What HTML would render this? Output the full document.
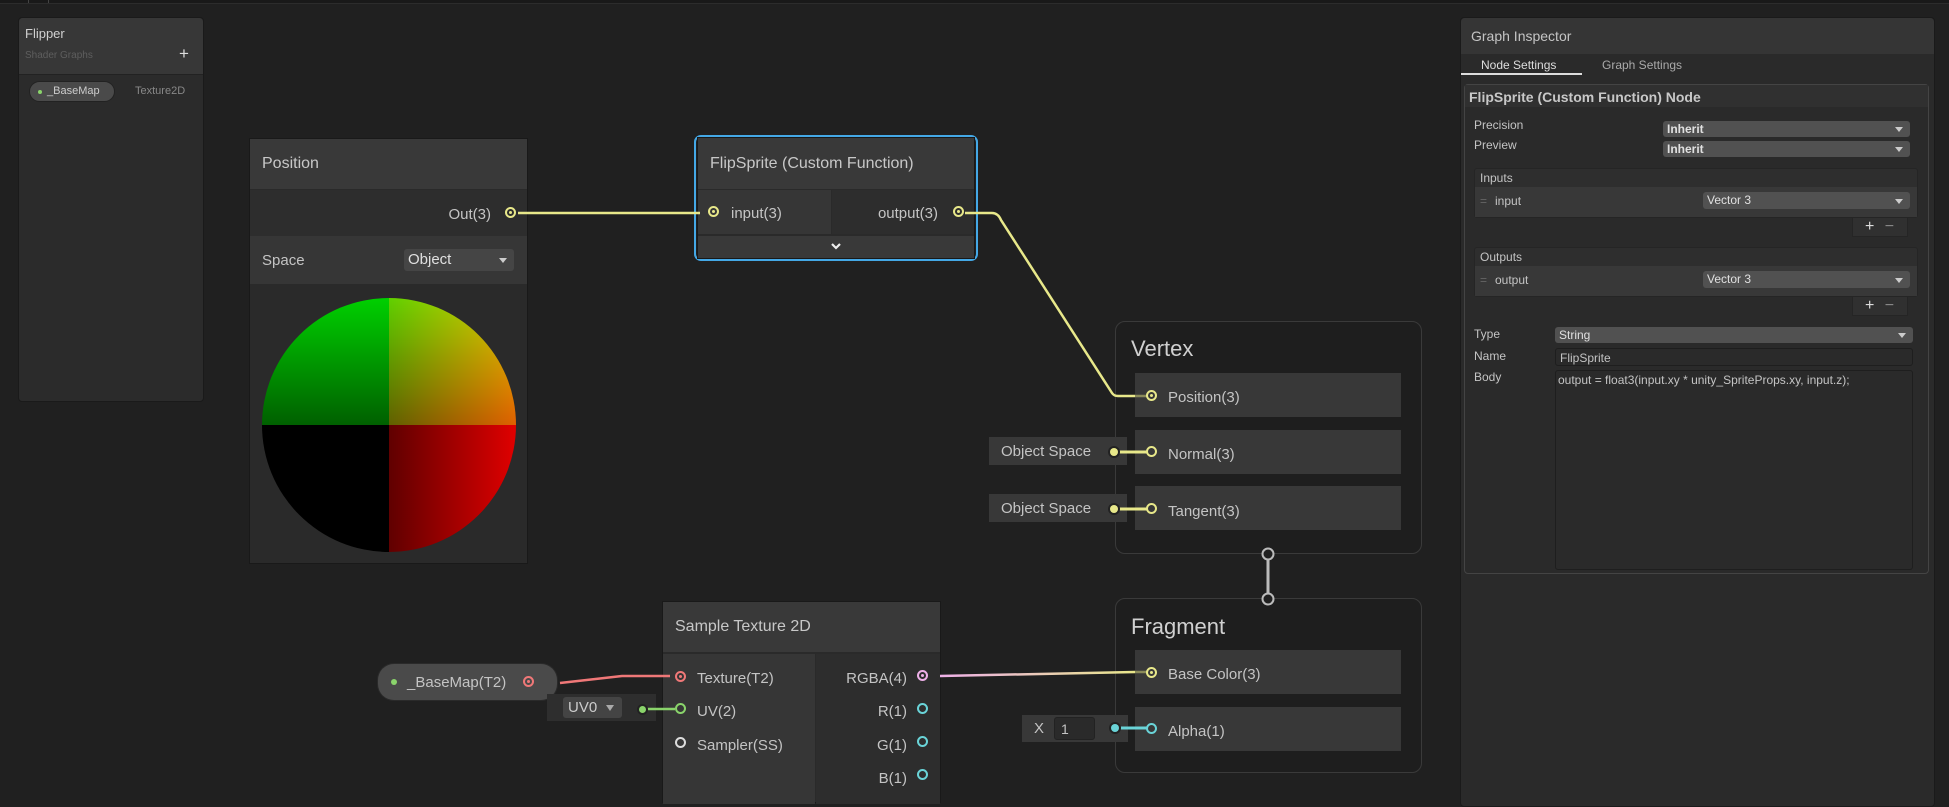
<!DOCTYPE html>
<html><head><meta charset="utf-8"><style>
*{box-sizing:border-box;margin:0;padding:0}
body{width:1949px;height:796px;background:#202020;font-family:"Liberation Sans",sans-serif;color:#c4c4c4;position:relative;overflow:hidden}
.a{position:absolute}
.node{position:absolute;background:#2a2a2a;box-shadow:0 0 0 1px #191919}
.hdr{position:absolute;left:0;right:0;top:0;background:#393939;font-size:16px;color:#c8c8c8;padding-left:12px}
.row{position:absolute;font-size:15px;color:#c4c4c4;white-space:nowrap}
.port{position:absolute;width:11px;height:11px;border-radius:50%;border:2px solid #999;z-index:3}
.pf::after{content:"";position:absolute;left:2px;top:2px;width:3px;height:3px;border-radius:50%;background:currentColor}
.ctx{position:absolute;border:1px solid #3a3a3a;border-radius:10px;background:#1e1e1e}
.slot{position:absolute;background:#383838;font-size:15px;color:#c4c4c4}
.dd{position:absolute;background:#515151;border-radius:3px;font-size:12px;font-weight:bold;color:#e0e0e0;padding-left:4px}
.dd::after{content:"";position:absolute;right:7px;top:50%;margin-top:-2px;border-left:4px solid transparent;border-right:4px solid transparent;border-top:5px solid #ccc}
.lbl{position:absolute;font-size:12px;color:#c4c4c4}
</style></head><body>
<div class="a" style="left:0;top:0;width:1949px;height:3px;background:#191919"></div>
<div class="a" style="left:0;top:3px;width:1949px;height:1px;background:#2c2c2c"></div>
<div class="a" style="left:28px;top:0;width:1px;height:3px;background:#444"></div>
<div class="a" style="left:48px;top:0;width:1px;height:3px;background:#444"></div>

<div class="a" style="left:18px;top:17px;width:186px;height:385px;background:#2b2b2b;border-radius:4px;border:1px solid #1a1a1a">
 <div class="a" style="left:0;top:0;width:184px;height:57px;background:#373737;border-radius:4px 4px 0 0;border-bottom:1px solid #222"></div>
 <div class="a" style="left:6px;top:8px;font-size:13px;color:#d0d0d0">Flipper</div>
 <div class="a" style="left:6px;top:32px;font-size:10px;color:#5e5e5e">Shader Graphs</div>
 <div class="a" style="left:160px;top:26px;font-size:17px;color:#ddd">+</div>
 <div class="a" style="left:10px;top:63px;width:86px;height:21px;border-radius:11px;background:#4a4a4a;border:1px solid #222;font-size:11px;color:#ccc;padding:3px 0 0 17px">_BaseMap</div>
 <div class="a" style="left:19px;top:72px;width:4px;height:4px;border-radius:50%;background:#8ad46b"></div>
 <div class="a" style="left:116px;top:67px;font-size:11px;color:#888">Texture2D</div>
</div>

<div class="node" style="left:250px;top:139px;width:277px;height:424px">
 <div class="hdr" style="height:50px;line-height:50px">Position</div>
 <div class="a" style="left:0;top:51px;width:277px;height:46px;background:#2d2d2d"></div>
 <div class="row" style="right:36px;top:67px">Out(3)</div>
 <div class="port pf" style="left:255px;top:68px;color:#e8e88a;border-color:#e8e88a"></div>
 <div class="a" style="left:0;top:97px;width:277px;height:48px;background:#363636"></div>
 <div class="row" style="left:12px;top:113px">Space</div>
 <div class="dd" style="left:154px;top:110px;width:110px;height:22px;font-weight:normal;font-size:15px;line-height:22px;background:#454545">Object</div>
 <svg class="a" style="left:12px;top:159px" width="254" height="254">
  <defs>
   <linearGradient id="rx" x1="0" x2="1"><stop offset="0.5" stop-color="#000"/><stop offset="0.5" stop-color="#600000"/><stop offset="1" stop-color="#e00000"/></linearGradient>
   <linearGradient id="gy" x1="0" y1="1" x2="0" y2="0"><stop offset="0.5" stop-color="#000"/><stop offset="0.5" stop-color="#006000"/><stop offset="1" stop-color="#00d000"/></linearGradient>
   <clipPath id="cc"><circle cx="127" cy="127" r="127"/></clipPath>
  </defs>
  <g clip-path="url(#cc)">
   <rect width="254" height="254" fill="url(#rx)"/>
   <rect width="254" height="254" fill="url(#gy)" style="mix-blend-mode:screen"/>
  </g>
 </svg>
</div>

<div class="a" style="left:694px;top:135px;width:284px;height:126px;border:2px solid #44a8e6;border-radius:7px"></div>
<div class="node" style="left:698px;top:138px;width:276px;height:120px;background:#2a2a2a">
 <div class="hdr" style="height:51px;line-height:51px">FlipSprite (Custom Function)</div>
 <div class="a" style="left:0;top:52px;width:133px;height:44px;background:#363636"></div>
 <div class="a" style="left:134px;top:52px;width:142px;height:44px;background:#2d2d2d"></div>
 <div class="port pf" style="left:10px;top:68px;color:#e8e88a;border-color:#e8e88a"></div>
 <div class="row" style="left:33px;top:67px">input(3)</div>
 <div class="row" style="right:36px;top:67px">output(3)</div>
 <div class="port pf" style="left:255px;top:68px;color:#e8e88a;border-color:#e8e88a"></div>
 <div class="a" style="left:0;top:98px;width:276px;height:22px;background:#393939"></div>
 <svg class="a" style="left:132px;top:104px" width="12" height="9"><path d="M2 2 L6 6 L10 2" stroke="#eee" stroke-width="2.2" fill="none"/></svg>
</div>

<div class="ctx" style="left:1115px;top:321px;width:307px;height:233px"></div>
<div class="a" style="left:1131px;top:336px;font-size:22px;color:#d0d0d0">Vertex</div>
<div class="slot" style="left:1135px;top:373px;width:266px;height:44px"></div>
<div class="slot" style="left:1135px;top:430px;width:266px;height:44px"></div>
<div class="slot" style="left:1135px;top:486px;width:266px;height:44px"></div>
<div class="port pf" style="left:1146px;top:390px;color:#e8e88a;border-color:#e8e88a"></div>
<div class="row" style="left:1168px;top:389px">Position(3)</div>
<div class="port" style="left:1146px;top:446px;border-color:#e8e88a;background:#383838"></div>
<div class="row" style="left:1168px;top:446px">Normal(3)</div>
<div class="port" style="left:1146px;top:503px;border-color:#e8e88a;background:#383838"></div>
<div class="row" style="left:1168px;top:503px">Tangent(3)</div>
<div class="a" style="left:989px;top:437px;width:138px;height:28px;background:#383838"></div>
<div class="row" style="left:1001px;top:443px">Object Space</div>
<div class="a" style="left:1110px;top:448px;width:8px;height:8px;border-radius:50%;background:#e8e88a;box-shadow:0 0 0 2px #222;z-index:3"></div>
<div class="a" style="left:989px;top:494px;width:138px;height:28px;background:#383838"></div>
<div class="row" style="left:1001px;top:500px">Object Space</div>
<div class="a" style="left:1110px;top:505px;width:8px;height:8px;border-radius:50%;background:#e8e88a;box-shadow:0 0 0 2px #222;z-index:3"></div>

<div class="ctx" style="left:1115px;top:598px;width:307px;height:175px"></div>
<div class="a" style="left:1131px;top:614px;font-size:22px;color:#d0d0d0">Fragment</div>
<div class="slot" style="left:1135px;top:650px;width:266px;height:44px"></div>
<div class="slot" style="left:1135px;top:707px;width:266px;height:44px"></div>
<div class="port pf" style="left:1146px;top:667px;color:#e8e88a;border-color:#e8e88a"></div>
<div class="row" style="left:1168px;top:666px">Base Color(3)</div>
<div class="port" style="left:1146px;top:723px;border-color:#6ad4d8;background:#383838"></div>
<div class="row" style="left:1168px;top:723px">Alpha(1)</div>
<div class="a" style="left:1022px;top:715px;width:106px;height:27px;background:#383838"></div>
<div class="row" style="left:1034px;top:720px">X</div>
<div class="a" style="left:1054px;top:717px;width:41px;height:23px;background:#2a2a2a;border:1px solid #222;border-radius:3px;font-size:14px;padding:3px 0 0 6px">1</div>
<div class="a" style="left:1111px;top:724px;width:8px;height:8px;border-radius:50%;background:#6ad4d8;box-shadow:0 0 0 2px #222;z-index:3"></div>

<div class="node" style="left:663px;top:602px;width:277px;height:200px">
 <div class="hdr" style="height:50px;line-height:50px">Sample Texture 2D</div>
 <div class="a" style="left:0;top:52px;width:152px;height:150px;background:#363636"></div>
 <div class="a" style="left:153px;top:52px;width:124px;height:150px;background:#2d2d2d"></div>
 <div class="port pf" style="left:12px;top:69px;color:#f07878;border-color:#f07878"></div>
 <div class="row" style="left:34px;top:68px">Texture(T2)</div>
 <div class="port" style="left:12px;top:101px;border-color:#8ad46b"></div>
 <div class="row" style="left:34px;top:101px">UV(2)</div>
 <div class="port" style="left:12px;top:135px;border-color:#ddd"></div>
 <div class="row" style="left:34px;top:135px">Sampler(SS)</div>
 <div class="row" style="right:33px;top:68px">RGBA(4)</div>
 <div class="port pf" style="left:254px;top:68px;color:#eeb0e8;border-color:#eeb0e8"></div>
 <div class="row" style="right:33px;top:101px">R(1)</div>
 <div class="port" style="left:254px;top:101px;border-color:#6ad4d8"></div>
 <div class="row" style="right:33px;top:135px">G(1)</div>
 <div class="port" style="left:254px;top:134px;border-color:#6ad4d8"></div>
 <div class="row" style="right:33px;top:168px">B(1)</div>
 <div class="port" style="left:254px;top:167px;border-color:#6ad4d8"></div>
</div>

<div class="a" style="left:378px;top:664px;width:179px;height:36px;border-radius:16px;background:#4a4a4a;box-shadow:0 0 0 1px #2a2a2a"></div>
<div class="a" style="left:391px;top:679px;width:6px;height:6px;border-radius:50%;background:#8ad46b"></div>
<div class="row" style="left:407px;top:674px;font-size:15px">_BaseMap(T2)</div>
<div class="port pf" style="left:523px;top:676px;color:#f07878;border-color:#f07878"></div>
<div class="a" style="left:547px;top:694px;width:109px;height:27px;background:#2e2e2e"></div>
<div class="a" style="left:563px;top:697px;width:59px;height:21px;background:#444;border-radius:3px;font-size:15px;padding:2px 0 0 5px;color:#ccc">UV0</div>
<div class="a" style="left:606px;top:705px;border-left:4px solid transparent;border-right:4px solid transparent;border-top:6px solid #aaa"></div>
<div class="a" style="left:639px;top:706px;width:7px;height:7px;border-radius:50%;background:#8ad46b;box-shadow:0 0 0 2px #222;z-index:3"></div>

<svg class="a" style="left:0;top:0;z-index:2;pointer-events:none" width="1949" height="796">
 <defs><linearGradient id="pg" x1="0" x2="1"><stop offset="0" stop-color="#eeb0e8"/><stop offset="1" stop-color="#e8e68a"/></linearGradient></defs>
 <path d="M518 213 H700" stroke="#e8e88a" stroke-width="2.5" fill="none"/>
 <path d="M965 213 H992 Q998 213 1001 220 L1112 393 Q1114 396 1118 396 H1135" stroke="#e8e88a" stroke-width="2.5" fill="none"/>
 <path d="M1135 396 H1148" stroke="#8a8a5a" stroke-width="2.5" fill="none"/>
 <path d="M560 683 L622 676 H670" stroke="#f07878" stroke-width="2.5" fill="none"/>
 <path d="M940 676 L1135 672" stroke="url(#pg)" stroke-width="2.5" fill="none"/>
 <path d="M1135 672 H1148" stroke="#8a8a5a" stroke-width="2.5" fill="none"/>
 <path d="M647 709 H675" stroke="#8ad46b" stroke-width="2.5" fill="none"/>
 <path d="M1119 452 H1148 M1119 509 H1148" stroke="#e8e88a" stroke-width="3" fill="none"/>
 <path d="M1120 728 H1148" stroke="#6ad4d8" stroke-width="3" fill="none"/>
 <path d="M1268 558 V595" stroke="#bbb" stroke-width="3"/>
 <circle cx="1268" cy="554" r="5.5" fill="#202020" stroke="#bbb" stroke-width="2"/>
 <circle cx="1268" cy="599" r="5.5" fill="#202020" stroke="#bbb" stroke-width="2"/>
</svg>

<div class="a" style="left:1460px;top:17px;width:475px;height:790px;background:#2a2a2a;border-radius:4px;border:1px solid #1a1a1a">
 <div class="a" style="left:0;top:0;width:473px;height:36px;background:#353535;border-radius:4px 4px 0 0"></div>
 <div class="a" style="left:10px;top:10px;font-size:14px;color:#c4c4c4">Graph Inspector</div>
 <div class="a" style="left:20px;top:40px;font-size:12px;color:#ddd">Node Settings</div>
 <div class="a" style="left:0;top:55px;width:121px;height:2px;background:#ddd"></div>
 <div class="a" style="left:141px;top:40px;font-size:12px;color:#aaa">Graph Settings</div>
 <div class="a" style="left:3px;top:66px;width:465px;height:490px;border:1px solid #444;border-radius:4px;background:#2a2a2a">
  <div class="a" style="left:0;top:0;width:463px;height:22px;background:#303030"></div>
  <div class="a" style="left:4px;top:4px;font-size:14px;font-weight:bold;color:#c8c8c8">FlipSprite (Custom Function) Node</div>
  <div class="lbl" style="left:9px;top:33px">Precision</div>
  <div class="dd" style="left:198px;top:36px;width:247px;height:16px;line-height:16px">Inherit</div>
  <div class="lbl" style="left:9px;top:53px">Preview</div>
  <div class="dd" style="left:198px;top:56px;width:247px;height:16px;line-height:16px">Inherit</div>
  <div class="a" style="left:9px;top:83px;width:444px;height:50px;background:#2e2e2e;border:1px solid #252525;border-radius:3px">
   <div class="a" style="left:0;top:18px;width:442px;height:30px;background:#383838"></div>
   <div class="lbl" style="left:5px;top:2px">Inputs</div>
   <div class="lbl" style="left:5px;top:25px;color:#666">=</div>
   <div class="lbl" style="left:20px;top:25px">input</div>
   <div class="dd" style="left:228px;top:23px;width:207px;height:17px;line-height:17px;font-weight:normal">Vector 3</div>
  </div>
  <div class="a" style="left:387px;top:133px;width:56px;height:19px;background:#303030;border:1px solid #252525;border-top:none;font-size:16px;color:#ddd;padding-left:12px;line-height:17px">+ <span style="color:#888;margin-left:6px">−</span></div>
  <div class="a" style="left:9px;top:162px;width:444px;height:50px;background:#2e2e2e;border:1px solid #252525;border-radius:3px">
   <div class="a" style="left:0;top:18px;width:442px;height:30px;background:#383838"></div>
   <div class="lbl" style="left:5px;top:2px">Outputs</div>
   <div class="lbl" style="left:5px;top:25px;color:#666">=</div>
   <div class="lbl" style="left:20px;top:25px">output</div>
   <div class="dd" style="left:228px;top:23px;width:207px;height:17px;line-height:17px;font-weight:normal">Vector 3</div>
  </div>
  <div class="a" style="left:387px;top:212px;width:56px;height:19px;background:#303030;border:1px solid #252525;border-top:none;font-size:16px;color:#ddd;padding-left:12px;line-height:17px">+ <span style="color:#888;margin-left:6px">−</span></div>
  <div class="lbl" style="left:9px;top:242px">Type</div>
  <div class="dd" style="left:90px;top:242px;width:358px;height:16px;line-height:16px;font-weight:normal">String</div>
  <div class="lbl" style="left:9px;top:264px">Name</div>
  <div class="a" style="left:90px;top:263px;width:358px;height:18px;background:#2a2a2a;border:1px solid #1e1e1e;border-radius:3px;font-size:12px;padding:2px 0 0 4px">FlipSprite</div>
  <div class="lbl" style="left:9px;top:285px">Body</div>
  <div class="a" style="left:90px;top:285px;width:358px;height:200px;background:#2a2a2a;border:1px solid #1e1e1e;border-radius:3px;font-size:12px;padding:2px 0 0 2px">output = float3(input.xy * unity_SpriteProps.xy, input.z);</div>
 </div>
</div>
</body></html>
